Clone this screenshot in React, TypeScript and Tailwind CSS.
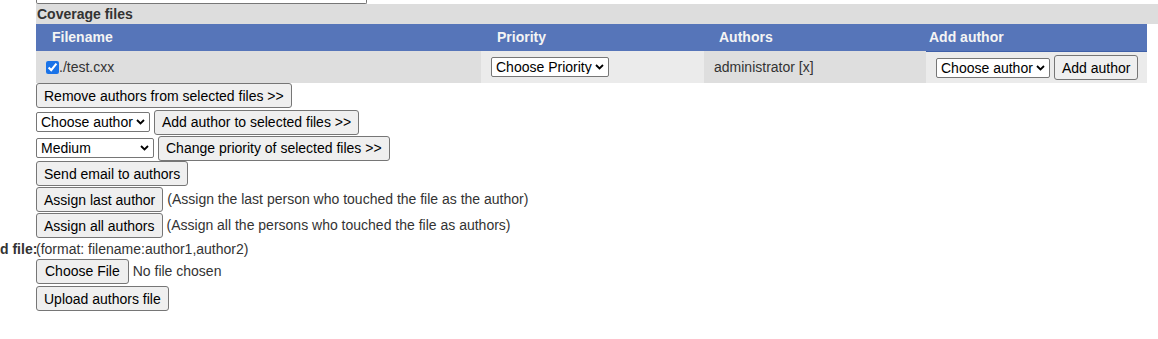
import React from "react";

const btn =
  "bg-[#efefef] border border-[#767676] rounded-[3px] px-[7px] h-[25px] text-[14px] text-black leading-none whitespace-nowrap";

function Select({
  width,
  options,
  value,
}: {
  width: string;
  options: string[];
  value: string;
}) {
  return (
    <span className={`relative inline-flex shrink-0 ${width}`}>
      <select
        className="appearance-none w-full border border-[#767676] rounded-[2px] bg-white h-5 text-[14px] leading-none text-black pl-[4px] pr-[10px]"
        defaultValue={value}
      >
        {options.map((o) => (
          <option key={o}>{o}</option>
        ))}
      </select>
      <svg
        className="absolute right-[5px] top-[7px] pointer-events-none"
        width="9"
        height="6"
        viewBox="0 0 9 6"
      >
        <path d="M1 1l3.5 3.5L8 1" fill="none" stroke="#000" strokeWidth="1.8" />
      </svg>
    </span>
  );
}

const priorities = ["Choose Priority", "Low", "Medium", "High"];
const authors = ["Choose author", "administrator"];

export default function App() {
  return (
    <div className="w-[1158px] h-[339px] overflow-hidden bg-white font-['Liberation_Sans',Arial,sans-serif] text-[14px] text-[#333]">
      {/* remnant of the control above */}
      <div className="ml-9 w-[331px] h-[4px] border-x border-b border-[#767676] rounded-b-[2px]" />

      <div className="ml-9 h-5 bg-[#dddddd] font-bold pl-[1px] leading-5">
        Coverage files
      </div>

      {/* Coverage table */}
      <div className="ml-9 w-[1111px] grid grid-cols-[445px_223px_222px_221px]">
        <div className="h-[27px] bg-[#5675b9] text-[#f4f4f4] font-bold flex items-center pl-4">
          Filename
        </div>
        <div className="h-[27px] bg-[#5675b9] text-[#f4f4f4] font-bold flex items-center pl-4">
          Priority
        </div>
        <div className="h-[27px] bg-[#5675b9] text-[#f4f4f4] font-bold flex items-center pl-[15px]">
          Authors
        </div>
        <div className="h-[27px] bg-[#5675b9] text-[#f4f4f4] font-bold flex items-center pl-[3px]">
          Add author
        </div>

        <div className="h-[32px] bg-[#dedede] flex items-center pl-[10px]">
          <input
            type="checkbox"
            defaultChecked
            className="w-[13px] h-[13px] m-0 accent-[#1a73e8]"
          />
          <span>./test.cxx</span>
        </div>
        <div className="h-[32px] bg-[#ebebeb] flex items-center pl-[10px]">
          <Select width="w-[118px]" options={priorities} value="Choose Priority" />
        </div>
        <div className="h-[32px] bg-[#dedede] flex items-center pl-[10px]">
          administrator [x]
        </div>
        <div className="h-[32px] bg-[#ebebeb] border-t border-[#3f60a8] flex items-center pl-[10px] gap-1">
          <Select width="w-[114px]" options={authors} value="Choose author" />
          <button className={`${btn} w-[84px] px-0`}>Add author</button>
        </div>
      </div>

      {/* Actions */}
      <div className="flex flex-col">
        <div className="h-[26px] pl-9 flex items-start">
          <button className={btn}>Remove authors from selected files &gt;&gt;</button>
        </div>
        <div className="h-[26px] pl-9 flex items-center gap-1">
          <Select width="w-[114px]" options={authors} value="Choose author" />
          <button className={btn}>Add author to selected files &gt;&gt;</button>
        </div>
        <div className="h-[26px] pl-9 flex items-center gap-1">
          <Select width="w-[118px]" options={priorities} value="Medium" />
          <button className={btn}>Change priority of selected files &gt;&gt;</button>
        </div>
        <div className="h-[26px] pl-9 flex items-start">
          <button className={btn}>Send email to authors</button>
        </div>
        <div className="h-[26px] pl-9 flex items-start gap-1">
          <button className={btn}>Assign last author</button>
          <span className="leading-[25px]">
            (Assign the last person who touched the file as the author)
          </span>
        </div>
        <div className="h-[26px] pl-9 flex items-start gap-1">
          <button className={btn}>Assign all authors</button>
          <span className="leading-[25px]">
            (Assign all the persons who touched the file as authors)
          </span>
        </div>
        <div className="h-5 flex items-center">
          <span className="w-9 font-bold whitespace-nowrap text-right">d file:</span>
          <span>(format: filename:author1,author2)</span>
        </div>
        <div className="h-[27px] pl-9 flex items-start">
          <input
            type="file"
            className="text-[14px] text-[#333] file:bg-[#efefef] file:border file:border-solid file:border-[#767676] file:rounded-[3px] file:px-2 file:h-[25px] file:text-[14px] file:text-black file:mr-1"
          />
        </div>
        <div className="h-[26px] pl-9 flex items-start">
          <button className={btn}>Upload authors file</button>
        </div>
      </div>
    </div>
  );
}
